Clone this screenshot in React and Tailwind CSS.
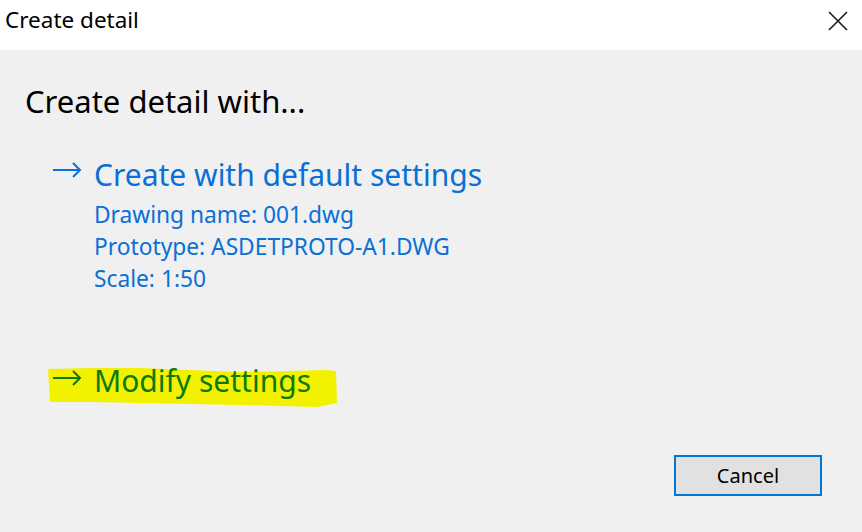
import React from 'react';

const font = { fontFamily: '"Noto Sans", "Open Sans", sans-serif' };

function Arrow({ color }) {
  return (
    <svg width="29" height="16" viewBox="0 0 29 16" fill="none" stroke={color} strokeWidth="2">
      <path d="M0 8h27" />
      <path d="M20 1l7 7-7 7" />
    </svg>
  );
}

// marker-pen stroke behind "Modify settings"
function Highlight() {
  return (
    <svg className="absolute left-[-46px] top-[4px]" width="292" height="45" viewBox="0 0 292 45">
      <path
        d="M0 4 L45 3 L92 3 L192 7 L279 5 L288 6 L289 38 L269 42 L192 40 L92 38 L42 37 L2 37 Z"
        fill="#f2f200"
      />
    </svg>
  );
}

export default function App() {
  return (
    <div className="w-[862px] h-[532px] bg-[#f0f0f0] flex flex-col overflow-hidden" style={font}>
      {/* title bar */}
      <div className="h-[50px] bg-white flex items-start justify-between shrink-0">
        <span className="pl-[5px] pt-[6px] text-[22.5px] leading-[28px] text-black">Create detail</span>
        <svg className="mt-[11px] mr-[14px]" width="20" height="20" viewBox="0 0 20 20" stroke="#1a1a1a" strokeWidth="1.6">
          <path d="M1 1l18 18M19 1L1 19" />
        </svg>
      </div>

      <div className="flex-1 flex flex-col pl-[25px] pr-[40px]">
        <h1 className="mt-[31px] text-[31px] leading-[40px] text-black font-normal">Create detail with...</h1>

        {/* default settings link */}
        <div className="mt-[32px] flex items-start">
          <div className="w-[69px] pl-[28px] pt-[9px] shrink-0">
            <Arrow color="#0a6fd6" />
          </div>
          <div className="flex flex-col text-[#0a6fd6]">
            <span className="text-[30px] leading-[44px]">Create with default settings</span>
            <span className="mt-[2px] text-[22.75px] leading-[32px]">Drawing name: 001.dwg</span>
            <span className="text-[22.75px] leading-[32px]">Prototype: ASDETPROTO-A1.DWG</span>
            <span className="text-[22.75px] leading-[32px]">Scale: 1:50</span>
          </div>
        </div>

        {/* modify settings link */}
        <div className="mt-[66px] flex items-start">
          <div className="w-[69px] pl-[28px] pt-[9px] shrink-0 relative z-10">
            <Arrow color="#0b7a0b" />
          </div>
          <div className="relative">
            <Highlight />
            <span className="relative block text-[30px] leading-[40px] text-[#0b7a0b]">Modify settings</span>
          </div>
        </div>

        <div className="mt-auto mb-[36px] flex justify-end">
          <button className="w-[148px] h-[41px] border-2 border-[#0078d7] bg-[#e1e1e1] text-[20px] text-black">
            Cancel
          </button>
        </div>
      </div>
    </div>
  );
}
